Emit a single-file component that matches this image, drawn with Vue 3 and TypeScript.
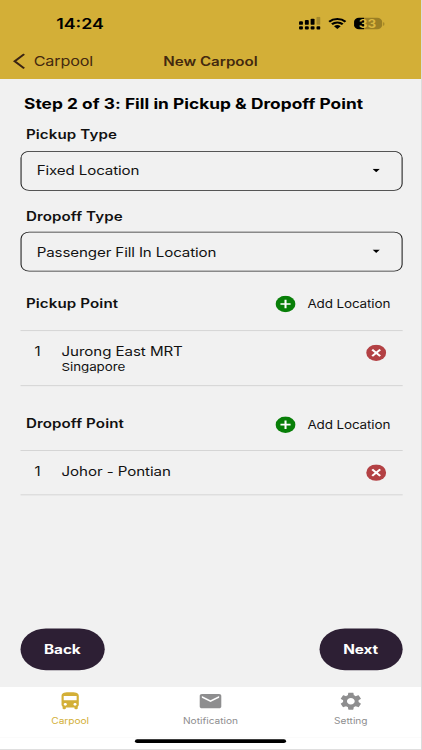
<script setup lang="ts">
interface Place {
  name: string
  area?: string
}

interface PointGroup {
  title: string
  places: Place[]
}

const fields = [
  { label: 'Pickup Type', value: 'Fixed Location' },
  { label: 'Dropoff Type', value: 'Passenger Fill In Location' },
]

const groups: PointGroup[] = [
  { title: 'Pickup Point', places: [{ name: 'Jurong East MRT', area: 'Singapore' }] },
  { title: 'Dropoff Point', places: [{ name: 'Johor - Pontian' }] },
]
</script>

<template>
  <div class="frame">
    <div class="screen">
      <header class="header">
        <div class="status">
          <span class="clock">14:24</span>
          <div class="indicators">
            <svg class="signal" width="20" height="15" viewBox="0 0 21 15" preserveAspectRatio="none">
              <rect x="0" y="5" width="3.8" height="4" rx="1" />
              <rect x="5.7" y="3.5" width="3.8" height="5.5" rx="1" />
              <rect x="11.3" y="2" width="3.8" height="7" rx="1" />
              <rect x="17" y="0" width="3.8" height="9" rx="1" opacity=".22" />
              <rect x="0" y="10.5" width="3.8" height="3.6" rx="1" />
              <rect x="5.7" y="10.5" width="3.8" height="3.6" rx="1" />
              <rect x="11.3" y="10.5" width="3.8" height="3.6" rx="1" />
              <rect x="17" y="10.5" width="3.8" height="3.6" rx="1" />
            </svg>
            <svg class="wifi" width="17" height="13" viewBox="0 0 17 13">
              <path d="M.9 4.5a11 11 0 0 1 15.2 0M3.5 7.3a7.2 7.2 0 0 1 10 0" fill="none" stroke="#000" stroke-width="2.2" />
              <path d="M8.5 12.7 5.4 9.6a4.4 4.4 0 0 1 6.2 0Z" />
            </svg>
            <div class="battery"><span class="charge">33</span></div>
            <i class="battery-tip"></i>
          </div>
        </div>
        <div class="titlebar">
          <div class="back-link">
            <svg width="12" height="18" viewBox="0 0 12 18"><path d="M10.4 1 1.6 9l8.8 8" fill="none" stroke="#3a2414" stroke-width="2.1" /></svg>
            <span class="back-text">Carpool</span>
          </div>
          <span class="page-title">New Carpool</span>
          <span></span>
        </div>
      </header>

      <main class="body">
        <h1 class="step">Step 2 of 3: Fill in Pickup &amp; Dropoff Point</h1>

        <div v-for="f in fields" :key="f.label" class="field">
          <div class="label">{{ f.label }}</div>
          <div class="select">
            <span>{{ f.value }}</span>
            <svg width="7" height="4" viewBox="0 0 7 4"><path d="M0 0h7L3.5 4Z" /></svg>
          </div>
        </div>

        <section v-for="g in groups" :key="g.title" class="group">
          <div class="group-head">
            <span class="group-title">{{ g.title }}</span>
            <div class="add">
              <svg width="19" height="19" viewBox="0 0 19 19">
                <circle cx="9.5" cy="9.5" r="9.2" fill="#087f08" />
                <path d="M9.5 4.8v9.4M4.8 9.5h9.4" stroke="#fff" stroke-width="1.9" />
              </svg>
              <span>Add Location</span>
            </div>
          </div>
          <div v-for="(p, i) in g.places" :key="p.name" class="place" :class="{ tall: p.area }">
            <span class="index">{{ i + 1 }}</span>
            <div class="place-text">
              <span>{{ p.name }}</span>
              <span v-if="p.area" class="area">{{ p.area }}</span>
            </div>
            <svg class="remove" width="19" height="19" viewBox="0 0 19 19">
              <circle cx="9.5" cy="9.5" r="9.2" fill="#b34144" />
              <path d="m5.8 5.8 7.4 7.4M13.2 5.8l-7.4 7.4" stroke="#fff" stroke-width="2.1" />
            </svg>
          </div>
        </section>

        <div class="actions">
          <button class="btn">Back</button>
          <button class="btn next">Next</button>
        </div>
      </main>

      <nav class="tabs">
        <div class="tab active">
          <svg width="24" height="24" viewBox="0 0 24 24"><path d="M4 16c0 .88.39 1.67 1 2.22V20c0 .55.45 1 1 1h1c.55 0 1-.45 1-1v-1h8v1c0 .55.45 1 1 1h1c.55 0 1-.45 1-1v-1.78c.61-.55 1-1.34 1-2.22V6c0-3.5-3.58-4-8-4s-8 .5-8 4v10zm3.5 1c-.83 0-1.5-.67-1.5-1.5S6.67 14 7.5 14s1.5.67 1.5 1.5S8.33 17 7.5 17zm9 0c-.83 0-1.5-.67-1.5-1.5s.67-1.5 1.5-1.5 1.5.67 1.5 1.5-.67 1.5-1.5 1.5zm1.5-6H6V6h12v5z" /></svg>
          <span>Carpool</span>
        </div>
        <div class="tab">
          <svg width="24" height="24" viewBox="0 0 24 24"><path d="M20 4H4c-1.1 0-1.99.9-1.99 2L2 18c0 1.1.9 2 2 2h16c1.1 0 2-.9 2-2V6c0-1.1-.9-2-2-2zm0 4-8 5-8-5V6l8 5 8-5v2z" /></svg>
          <span>Notification</span>
        </div>
        <div class="tab">
          <svg width="24" height="24" viewBox="0 0 24 24"><path d="M19.14 12.94c.04-.3.06-.61.06-.94 0-.32-.02-.64-.07-.94l2.03-1.58c.18-.14.23-.41.12-.61l-1.92-3.32c-.12-.22-.37-.29-.59-.22l-2.39.96c-.5-.38-1.03-.7-1.62-.94l-.36-2.54c-.04-.24-.24-.41-.48-.41h-3.84c-.24 0-.43.17-.47.41l-.36 2.54c-.59.24-1.13.57-1.62.94l-2.39-.96c-.22-.08-.47 0-.59.22L2.74 8.87c-.12.21-.08.47.12.61l2.03 1.58c-.05.3-.09.63-.09.94s.02.64.07.94l-2.03 1.58c-.18.14-.23.41-.12.61l1.92 3.32c.12.22.37.29.59.22l2.39-.96c.5.38 1.03.7 1.62.94l.36 2.54c.05.24.24.41.48.41h3.84c.24 0 .44-.17.47-.41l.36-2.54c.59-.24 1.13-.56 1.62-.94l2.39.96c.22.08.47 0 .59-.22l1.92-3.32c.12-.22.07-.47-.12-.61l-2.01-1.58zM12 15.6c-1.98 0-3.6-1.62-3.6-3.6s1.62-3.6 3.6-3.6 3.6 1.62 3.6 3.6-1.62 3.6-3.6 3.6z" /></svg>
          <span>Setting</span>
        </div>
      </nav>
      <div class="home"></div>
    </div>
  </div>
</template>

<style>
body {
  background: #dcdcdc;
  overflow: hidden;
}
</style>

<style scoped>
.frame {
  width: 422px;
  height: 750px;
  overflow: hidden;
}
/* The phone screen is laid out at 390x844 and fitted to the window. */
.screen {
  box-sizing: border-box;
  width: 390px;
  height: 844px;
  display: flex;
  flex-direction: column;
  transform: scale(1.0795, 0.8876);
  transform-origin: 0 0;
  background: #f1f1f1;
  color: #111;
  font-family: Inter, "Liberation Sans", sans-serif;
  white-space: nowrap;
  overflow: hidden;
}
.header {
  height: 89px;
  flex: none;
  background: #d3af37;
}
.status {
  display: flex;
  justify-content: space-between;
  align-items: center;
  height: 53px;
  padding: 0 34px 0 52px;
}
.clock {
  font-size: 16.5px;
  font-weight: 600;
  color: #000;
}
.indicators {
  display: flex;
  align-items: center;
}
.wifi {
  margin: 0 7px;
}
.battery {
  width: 26px;
  height: 13.5px;
  border-radius: 4.5px;
  background: linear-gradient(90deg, #000 34%, #9b7f24 34%);
  display: flex;
  align-items: center;
  justify-content: center;
}
.charge {
  font-size: 12.5px;
  font-weight: 700;
  line-height: 13px;
  color: #dcb840;
}
.battery-tip {
  width: 1.5px;
  height: 4px;
  margin-left: 1px;
  border-radius: 0 2px 2px 0;
  background: #9b7f24;
}
.titlebar {
  display: grid;
  grid-template-columns: 1fr auto 1fr;
  align-items: center;
  height: 31px;
  color: #43290f;
}
.back-link {
  display: flex;
  align-items: center;
  gap: 7.5px;
  padding-left: 11.7px;
}
.back-text {
  font-size: 15px;
  letter-spacing: -0.15px;
}
.page-title {
  font-size: 14px;
  font-weight: 600;
}
.body {
  flex: 1;
  display: flex;
  flex-direction: column;
  padding: 16px 17.5px 19px 18.5px;
}
.step {
  margin: 0 0 11px 3.8px;
  font-size: 16px;
  letter-spacing: 0.04px;
  line-height: 24px;
  font-weight: 700;
  color: #000;
}
.field {
  margin-bottom: 17px;
}
.label {
  padding-left: 5.5px;
  margin-bottom: 6.5px;
  font-size: 14px;
  letter-spacing: 0.1px;
  line-height: 23px;
  font-weight: 600;
}
.select {
  box-sizing: border-box;
  height: 45px;
  border: 1.1px solid #222;
  border-radius: 8px;
  display: flex;
  align-items: center;
  justify-content: space-between;
  padding: 0 20px 1px 14.5px;
  font-size: 14px;
  letter-spacing: -0.11px;
}
.group {
  margin-bottom: 24px;
}
.group-head {
  display: flex;
  align-items: center;
  justify-content: space-between;
  height: 39.5px;
  padding: 0 11px 9px 5.5px;
}
.group-title {
  font-size: 14px;
  letter-spacing: 0.1px;
  font-weight: 600;
  margin-top: -3px;
}
.add {
  display: flex;
  align-items: center;
  gap: 11px;
  font-size: 12.5px;
  letter-spacing: -0.13px;
}
.place {
  box-sizing: border-box;
  height: 50.5px;
  border-top: 1.1px solid #d1d1d1;
  border-bottom: 1.1px solid #d1d1d1;
  display: flex;
  align-items: flex-start;
  padding: 13px 15px 0 13.5px;
  font-size: 14px;
  letter-spacing: -0.07px;
  line-height: 20px;
}
.place.tall {
  height: 63px;
}
.index {
  width: 25px;
}
.place-text {
  flex: 1;
  display: flex;
  flex-direction: column;
}
.area {
  font-size: 12.4px;
  line-height: 16px;
}
.remove {
  margin-top: 2px;
}
.actions {
  margin-top: auto;
  display: flex;
  justify-content: space-between;
}
.btn {
  width: 78.5px;
  height: 47px;
  padding: 0;
  border: 0;
  border-radius: 23.5px;
  background: #2d1f34;
  color: #fff;
  font: 700 14.2px Inter, "Liberation Sans", sans-serif;
  letter-spacing: -0.1px;
}
.next {
  width: 77px;
}
.tabs {
  flex: none;
  height: 57px;
  background: #fff;
  display: grid;
  grid-template-columns: repeat(3, 1fr);
}
.tab {
  display: flex;
  flex-direction: column;
  align-items: center;
  padding-top: 4px;
  gap: 4px;
  color: #8e8e8f;
  fill: #8e8e8f;
  font-size: 9.4px;
  line-height: 13px;
}
.active {
  color: #d3af37;
  fill: #d3af37;
}
.home {
  flex: none;
  height: 13px;
  background: #fff;
}
.home::before {
  content: "";
  display: block;
  width: 140px;
  height: 4.5px;
  margin: 1.5px auto 0;
  border-radius: 3px;
  background: #000;
}
</style>
